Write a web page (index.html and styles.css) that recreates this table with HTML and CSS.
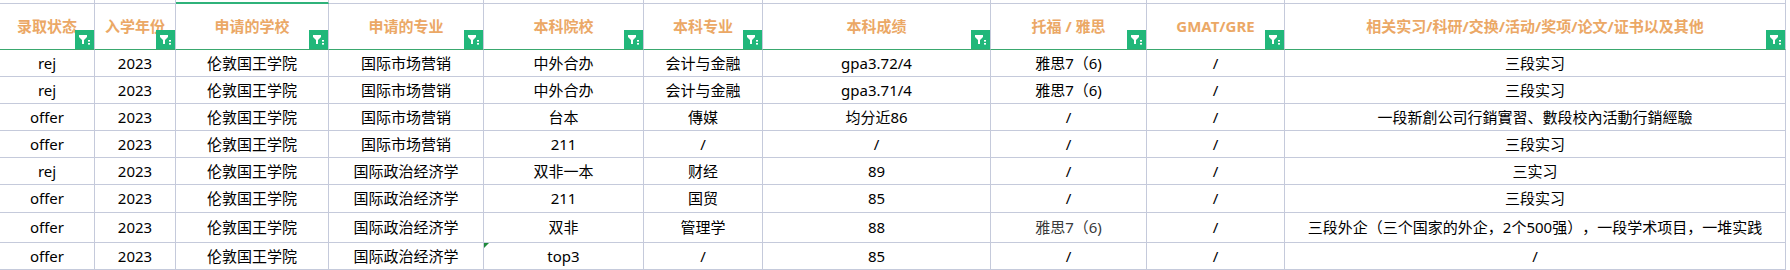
FILE: index.html
```html
<!DOCTYPE html>
<html lang="zh">
<head>
<meta charset="utf-8">
<title>Sheet</title>
<link rel="stylesheet" href="styles.css">
</head>
<body>
<div class="sheet">
  <div class="top"></div><div class="top"></div><div class="top sel"></div><div class="top"></div><div class="top"></div><div class="top"></div><div class="top"></div><div class="top"></div><div class="top"></div><div class="top"></div>

  <div class="hd"><span>录取状态</span><svg class="flt" viewBox="0 0 19 19"><rect width="19" height="19" fill="#21b77a"/><path d="M4 5H12V7L9 10V14H7V10L4 7Z" fill="#fff"/><rect x="13" y="10" width="2" height="1.6" fill="#fff"/><rect x="13" y="13" width="2" height="1.6" fill="#fff"/></svg></div>
  <div class="hd"><span>入学年份</span><svg class="flt" viewBox="0 0 19 19"><rect width="19" height="19" fill="#21b77a"/><path d="M4 5H12V7L9 10V14H7V10L4 7Z" fill="#fff"/><rect x="13" y="10" width="2" height="1.6" fill="#fff"/><rect x="13" y="13" width="2" height="1.6" fill="#fff"/></svg></div>
  <div class="hd"><span>申请的学校</span><svg class="flt" viewBox="0 0 19 19"><rect width="19" height="19" fill="#21b77a"/><path d="M4 5H12V7L9 10V14H7V10L4 7Z" fill="#fff"/><rect x="13" y="10" width="2" height="1.6" fill="#fff"/><rect x="13" y="13" width="2" height="1.6" fill="#fff"/></svg></div>
  <div class="hd"><span>申请的专业</span><svg class="flt" viewBox="0 0 19 19"><rect width="19" height="19" fill="#21b77a"/><path d="M4 5H12V7L9 10V14H7V10L4 7Z" fill="#fff"/><rect x="13" y="10" width="2" height="1.6" fill="#fff"/><rect x="13" y="13" width="2" height="1.6" fill="#fff"/></svg></div>
  <div class="hd"><span>本科院校</span><svg class="flt" viewBox="0 0 19 19"><rect width="19" height="19" fill="#21b77a"/><path d="M4 5H12V7L9 10V14H7V10L4 7Z" fill="#fff"/><rect x="13" y="10" width="2" height="1.6" fill="#fff"/><rect x="13" y="13" width="2" height="1.6" fill="#fff"/></svg></div>
  <div class="hd"><span>本科专业</span><svg class="flt" viewBox="0 0 19 19"><rect width="19" height="19" fill="#21b77a"/><path d="M4 5H12V7L9 10V14H7V10L4 7Z" fill="#fff"/><rect x="13" y="10" width="2" height="1.6" fill="#fff"/><rect x="13" y="13" width="2" height="1.6" fill="#fff"/></svg></div>
  <div class="hd"><span>本科成绩</span><svg class="flt" viewBox="0 0 19 19"><rect width="19" height="19" fill="#21b77a"/><path d="M4 5H12V7L9 10V14H7V10L4 7Z" fill="#fff"/><rect x="13" y="10" width="2" height="1.6" fill="#fff"/><rect x="13" y="13" width="2" height="1.6" fill="#fff"/></svg></div>
  <div class="hd"><span>托福 / 雅思</span><svg class="flt" viewBox="0 0 19 19"><rect width="19" height="19" fill="#21b77a"/><path d="M4 5H12V7L9 10V14H7V10L4 7Z" fill="#fff"/><rect x="13" y="10" width="2" height="1.6" fill="#fff"/><rect x="13" y="13" width="2" height="1.6" fill="#fff"/></svg></div>
  <div class="hd"><span>GMAT/GRE</span><svg class="flt" viewBox="0 0 19 19"><rect width="19" height="19" fill="#21b77a"/><path d="M4 5H12V7L9 10V14H7V10L4 7Z" fill="#fff"/><rect x="13" y="10" width="2" height="1.6" fill="#fff"/><rect x="13" y="13" width="2" height="1.6" fill="#fff"/></svg></div>
  <div class="hd"><span>相关实习/科研/交换/活动/奖项/论文/证书以及其他</span><svg class="flt" viewBox="0 0 19 19"><rect width="19" height="19" fill="#21b77a"/><path d="M4 5H12V7L9 10V14H7V10L4 7Z" fill="#fff"/><rect x="13" y="10" width="2" height="1.6" fill="#fff"/><rect x="13" y="13" width="2" height="1.6" fill="#fff"/></svg></div>

  <div class="c">rej</div><div class="c">2023</div><div class="c">伦敦国王学院</div><div class="c">国际市场营销</div><div class="c">中外合办</div><div class="c">会计与金融</div><div class="c">gpa3.72/4</div><div class="c">雅思7（6)</div><div class="c">/</div><div class="c">三段实习</div>

  <div class="c">rej</div><div class="c">2023</div><div class="c">伦敦国王学院</div><div class="c">国际市场营销</div><div class="c">中外合办</div><div class="c">会计与金融</div><div class="c">gpa3.71/4</div><div class="c">雅思7（6)</div><div class="c">/</div><div class="c">三段实习</div>

  <div class="c">offer</div><div class="c">2023</div><div class="c">伦敦国王学院</div><div class="c">国际市场营销</div><div class="c">台本</div><div class="c">傳媒</div><div class="c">均分近86</div><div class="c">/</div><div class="c">/</div><div class="c">一段新創公司行銷實習、數段校內活動行銷經驗</div>

  <div class="c">offer</div><div class="c">2023</div><div class="c">伦敦国王学院</div><div class="c">国际市场营销</div><div class="c">211</div><div class="c">/</div><div class="c">/</div><div class="c">/</div><div class="c">/</div><div class="c">三段实习</div>

  <div class="c">rej</div><div class="c">2023</div><div class="c">伦敦国王学院</div><div class="c">国际政治经济学</div><div class="c">双非一本</div><div class="c">财经</div><div class="c">89</div><div class="c">/</div><div class="c">/</div><div class="c">三实习</div>

  <div class="c">offer</div><div class="c">2023</div><div class="c">伦敦国王学院</div><div class="c">国际政治经济学</div><div class="c">211</div><div class="c">国贸</div><div class="c">85</div><div class="c">/</div><div class="c">/</div><div class="c">三段实习</div>

  <div class="c">offer</div><div class="c">2023</div><div class="c">伦敦国王学院</div><div class="c">国际政治经济学</div><div class="c">双非</div><div class="c">管理学</div><div class="c">88</div><div class="c grey">雅思7（6)</div><div class="c">/</div><div class="c">三段外企（三个国家的外企，2个500强），一段学术项目，一堆实践</div>

  <div class="c">offer</div><div class="c">2023</div><div class="c">伦敦国王学院</div><div class="c">国际政治经济学</div><div class="c mark">top3</div><div class="c">/</div><div class="c">85</div><div class="c">/</div><div class="c">/</div><div class="c">/</div>
</div>
</body>
</html>
```

FILE: styles.css
```css
html, body {
  margin: 0;
  padding: 0;
  background: #ffffff;
}

body {
  width: 1790px;
  height: 270px;
  overflow: hidden;
  font-family: "Noto Sans", "Noto Sans CJK SC", sans-serif;
  font-size: 15px;
  color: #000;
  text-spacing-trim: space-all;
}

.sheet {
  display: grid;
  grid-template-columns: 95px 81px 153px 155px 160px 119px 228px 156px 138px 501px;
  grid-template-rows: 4px 46px 27px 27px 27px 27px 27px 28px 30px 27px;
}

.sheet > div {
  box-sizing: border-box;
  border-right: 1px solid #c5cadb;
  border-bottom: 1px solid #c5cadb;
}

.top.sel {
  border-bottom: 2px solid #2fb27a;
}

.hd {
  position: relative;
  display: flex;
  align-items: center;
  justify-content: center;
  white-space: nowrap;
  color: #eba866;
  font-weight: bold;
  padding-bottom: 2px;
}

.sheet > .hd {
  border-bottom: 1px solid #3aa86f;
}

.flt {
  position: absolute;
  right: 0;
  bottom: 0;
  width: 19px;
  height: 19px;
  display: block;
}

.c {
  display: flex;
  align-items: center;
  justify-content: center;
  white-space: nowrap;
  line-height: 1;
}

.c.grey {
  color: #3a3a3a;
}

.c.mark {
  position: relative;
}

.c.mark::before {
  content: "";
  position: absolute;
  left: 0;
  top: 0;
  width: 0;
  height: 0;
  border-top: 5px solid #1f8a3c;
  border-right: 5px solid transparent;
}
```
